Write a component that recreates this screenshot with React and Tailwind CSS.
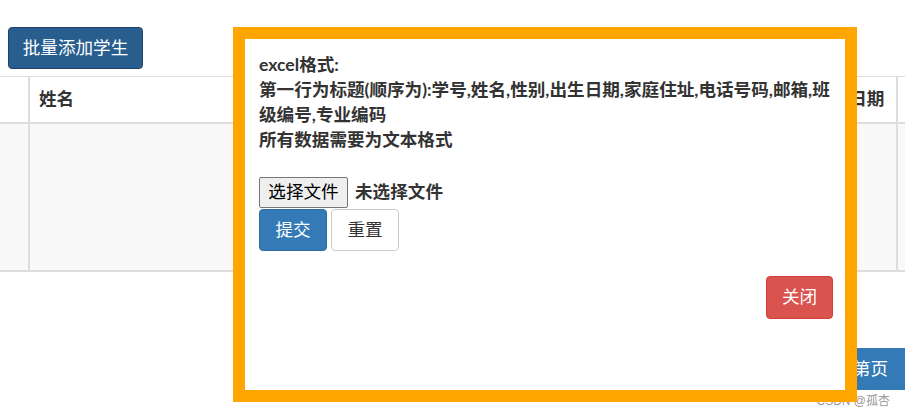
export default function App() {
  const font = { fontFamily: 'Lato, "Noto Sans CJK SC", sans-serif' };
  return (
    <div className="relative w-[905px] h-[416px] overflow-hidden bg-white text-[#333]" style={font}>
      {/* background page */}
      <div className="pt-[27px]">
        <div className="pl-[8px]">
          <button className="h-[42px] w-[135px] rounded-[4px] border border-[#1d4466] bg-[#285e8e] text-[17.6px] text-white">
            批量添加学生
          </button>
        </div>
        <div className="mt-[7px] w-[905px]">
          <div className="flex h-[48px] border-t border-[#ddd] border-b-2 border-b-[#ddd]">
            <div className="w-[30px] border-r-2 border-[#ddd]"></div>
            <div className="w-[776px] pl-[9px] flex items-center text-[17.6px] font-bold">姓名</div>
            <div className="w-[92px] border-r-2 border-[#ddd] pl-[8px] flex items-center text-[17.6px] font-bold whitespace-nowrap">出生日期</div>
            <div className="flex-1"></div>
          </div>
          <div className="flex h-[148px] bg-[#f9f9f9] border-b-2 border-[#ddd]">
            <div className="w-[30px] border-r-2 border-[#ddd]"></div>
            <div className="w-[776px]"></div>
            <div className="w-[92px] border-r-2 border-[#ddd]"></div>
            <div className="flex-1"></div>
          </div>
        </div>
        <div className="mt-[76px] flex justify-end">
          <div className="flex h-[42px] w-[80px] items-center justify-end bg-[#337ab7] pr-[17px] text-[17.6px] text-white">第页</div>
        </div>
      </div>
      <div className="absolute right-[15px] bottom-[8px] text-[12px] leading-[14px] text-[#999]" style={{ fontFamily: '"Liberation Sans", "Noto Sans CJK SC", sans-serif' }}>
        CSDN @孤杏
      </div>

      {/* modal overlay */}
      <div className="absolute left-[233px] top-[27px] w-[624px] h-[375px] border-[12px] border-[#ffa500] bg-white">
        <div className="flex h-full flex-col pl-[14px] pr-[12px] pt-[13px]">
          <div className="w-[584px] text-[17.6px] font-bold leading-[25px] text-[#333]">
            <div>excel格式:</div>
            <div>第一行为标题(顺序为):学号,姓名,性别,出生日期,家庭住址,电话号码,邮箱,班级编号,专业编码</div>
            <div>所有数据需要为文本格式</div>
          </div>
          <div className="mt-[25px] flex items-center">
            <button className="h-[31px] w-[89px] rounded-[2px] border border-[#767676] bg-[#efefef] text-[17.6px] text-black">选择文件</button>
            <span className="ml-[7px] text-[17.6px] font-bold text-[#333]">未选择文件</span>
          </div>
          <div className="mt-[1px] flex gap-[4px]">
            <button className="h-[42px] w-[68px] rounded-[4px] border border-[#2e6da4] bg-[#337ab7] text-[17.6px] text-white">提交</button>
            <button className="h-[42px] w-[68px] rounded-[4px] border border-[#ccc] bg-white text-[17.6px] text-[#333]">重置</button>
          </div>
          <div className="mt-[25px] flex justify-end">
            <button className="h-[43px] w-[67px] rounded-[4px] border border-[#d43f3a] bg-[#d9534f] text-[17.6px] text-white">关闭</button>
          </div>
        </div>
      </div>
    </div>
  );
}
